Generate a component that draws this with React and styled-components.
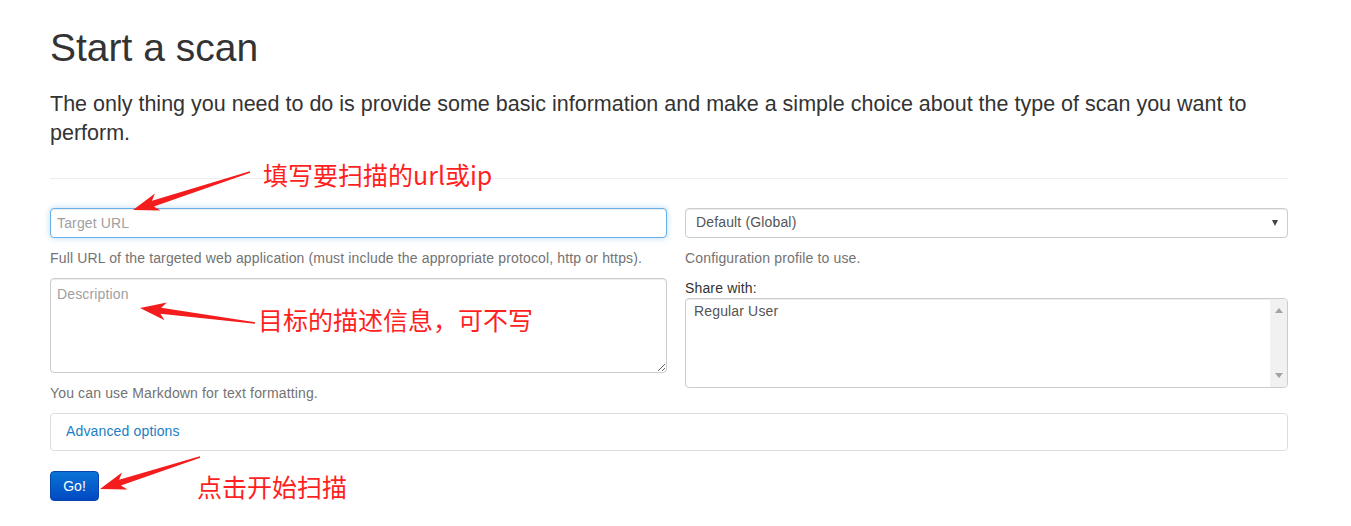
import React from 'react'
import styled, { createGlobalStyle } from 'styled-components'

const GlobalStyle = createGlobalStyle`
  html, body {
    margin: 0;
    padding: 0;
    background: #fff;
  }
  body {
    font-family: "Liberation Sans", Arial, sans-serif;
    font-size: 14px;
    line-height: 1.42857;
    color: #333;
  }
  * {
    box-sizing: border-box;
  }
`

const Page = styled.div`
  position: relative;
  width: 1351px;
  height: 526px;
  overflow: hidden;
  padding: 27px 0 0 50px;
`

const Content = styled.div`
  width: 1238px;
`

const Title = styled.h1`
  margin: 0;
  font-size: 39px;
  font-weight: 400;
  line-height: 1.1;
  color: #333;
`

const Lead = styled.p`
  margin: 20px 0 0;
  font-size: 21.5px;
  line-height: 29px;
  color: #333;
`

const Divider = styled.hr`
  margin: 30px 0 29px;
  border: 0;
  border-top: 1px solid #eee;
`

const Columns = styled.div`
  display: grid;
  grid-template-columns: 617px 603px;
  column-gap: 18px;
  align-items: start;
`

const Column = styled.div`
  display: flex;
  flex-direction: column;
`

const smallText = `
  font-size: 14px;
  letter-spacing: 0.15px;
`

const TextInput = styled.input`
  width: 100%;
  height: 30px;
  padding: 5px 6px;
  font-family: inherit;
  ${smallText}
  color: #555;
  border: 1px solid #66afe9;
  border-radius: 4px;
  outline: none;
  box-shadow: inset 0 1px 1px rgba(0, 0, 0, 0.075), 0 0 6px rgba(102, 175, 233, 0.45);
  &::placeholder {
    color: #a0a0a0;
  }
`

const TextArea = styled.textarea`
  width: 100%;
  height: 95px;
  padding: 5px 6px;
  font-family: inherit;
  ${smallText}
  line-height: 20px;
  color: #555;
  border: 1px solid #ccc;
  border-radius: 4px;
  outline: none;
  resize: vertical;
  box-shadow: inset 0 1px 1px rgba(0, 0, 0, 0.075);
  &::placeholder {
    color: #a0a0a0;
  }
`

const Help = styled.p`
  margin: 10px 0;
  ${smallText}
  line-height: 20px;
  color: #737373;
`

const Label = styled.div`
  ${smallText}
  line-height: 20px;
  color: #333;
`

const Select = styled.div`
  display: flex;
  align-items: center;
  justify-content: space-between;
  height: 30px;
  padding: 0 9px 0 10px;
  border: 1px solid #ccc;
  border-radius: 4px;
  ${smallText}
  color: #555;
  box-shadow: inset 0 1px 1px rgba(0, 0, 0, 0.075);
`

const Caret = styled.span`
  width: 0;
  height: 0;
  border-left: 3.5px solid transparent;
  border-right: 3.5px solid transparent;
  border-top: 6px solid #444;
`

const MultiSelect = styled.div`
  display: flex;
  height: 90px;
  border: 1px solid #ccc;
  border-radius: 4px;
  overflow: hidden;
  box-shadow: inset 0 1px 1px rgba(0, 0, 0, 0.075);
`

const OptionList = styled.div`
  flex: 1;
  padding: 3px 8px;
`

const Option = styled.div`
  ${smallText}
  line-height: 18px;
  color: #555;
`

const ScrollTrack = styled.div`
  width: 17px;
  background: #f1f1f1;
  display: flex;
  flex-direction: column;
  justify-content: space-between;
  align-items: center;
  padding: 9px 0 9px;
`

const ScrollArrow = styled.span`
  width: 0;
  height: 0;
  border-left: 4px solid transparent;
  border-right: 4px solid transparent;
  ${({ $dir }) =>
    $dir === 'up'
      ? 'border-bottom: 5px solid #a3a3a3;'
      : 'border-top: 5px solid #a3a3a3;'}
`

const Panel = styled.div`
  display: flex;
  align-items: center;
  height: 38px;
  padding: 0 15px;
  border: 1px solid #ddd;
  border-radius: 4px;
`

const PanelLink = styled.a`
  ${smallText}
  color: #1b7ec2;
  text-decoration: none;
`

const GoButton = styled.button`
  margin-top: 20px;
  width: 49px;
  height: 30px;
  padding: 0;
  font-family: inherit;
  font-size: 14px;
  color: #fff;
  border: 1px solid #0845a8;
  border-radius: 4px;
  background: linear-gradient(to bottom, #0a74d6, #0049c2);
`

const Overlay = styled.svg`
  position: absolute;
  top: 0;
  left: 0;
  pointer-events: none;
`

const Note = styled.span`
  position: absolute;
  left: ${({ $x }) => $x}px;
  top: ${({ $y }) => $y}px;
  font-family: "Microsoft YaHei", "Noto Sans CJK SC", sans-serif;
  font-size: 25px;
  line-height: 1;
  color: #ff1f1f;
  white-space: nowrap;
`

function arrowPoints(tail, tip, { w0 = 0.7, w1 = 3, head = 21, hw = 9, sweep = 5 } = {}) {
  const [x1, y1] = tail
  const [x2, y2] = tip
  const len = Math.hypot(x2 - x1, y2 - y1)
  const ux = (x2 - x1) / len
  const uy = (y2 - y1) / len
  const nx = -uy
  const ny = ux
  const bx = x2 - ux * head
  const by = y2 - uy * head
  const gx = x2 - ux * (head + sweep)
  const gy = y2 - uy * (head + sweep)
  const pts = [
    [x1 + nx * w0, y1 + ny * w0],
    [bx + nx * w1, by + ny * w1],
    [gx + nx * hw, gy + ny * hw],
    [x2, y2],
    [gx - nx * hw, gy - ny * hw],
    [bx - nx * w1, by - ny * w1],
    [x1 - nx * w0, y1 - ny * w0],
  ]
  return pts.map(p => p.map(v => v.toFixed(1)).join(',')).join(' ')
}

const arrows = [
  { tail: [250, 172], tip: [133, 210] },
  { tail: [255, 323], tip: [140, 308] },
  { tail: [200, 457], tip: [100, 489] },
]

function App() {
  return (
    <Page>
      <GlobalStyle />
      <Content>
        <Title>Start a scan</Title>
        <Lead>
          The only thing you need to do is provide some basic information and make a simple choice about the
          type of scan you want to perform.
        </Lead>
        <Divider />

        <Columns>
          <Column>
            <TextInput placeholder="Target URL" />
            <Help>Full URL of the targeted web application (must include the appropriate protocol, http or https).</Help>
            <TextArea placeholder="Description" />
            <Help>You can use Markdown for text formatting.</Help>
          </Column>
          <Column>
            <Select>
              <span>Default (Global)</span>
              <Caret />
            </Select>
            <Help>Configuration profile to use.</Help>
            <Label>Share with:</Label>
            <MultiSelect>
              <OptionList>
                <Option>Regular User</Option>
              </OptionList>
              <ScrollTrack>
                <ScrollArrow $dir="up" />
                <ScrollArrow $dir="down" />
              </ScrollTrack>
            </MultiSelect>
          </Column>
        </Columns>

        <Panel>
          <PanelLink href="#">Advanced options</PanelLink>
        </Panel>
        <GoButton>Go!</GoButton>
      </Content>

      <Overlay width="1351" height="526" viewBox="0 0 1351 526">
        {arrows.map((a, i) => (
          <polygon key={i} points={arrowPoints(a.tail, a.tip)} fill="#f41c1c" />
        ))}
      </Overlay>
      <Note $x={263} $y={162}>填写要扫描的url或ip</Note>
      <Note $x={258} $y={307}>目标的描述信息，可不写</Note>
      <Note $x={197} $y={474}>点击开始扫描</Note>
    </Page>
  )
}

export default App
